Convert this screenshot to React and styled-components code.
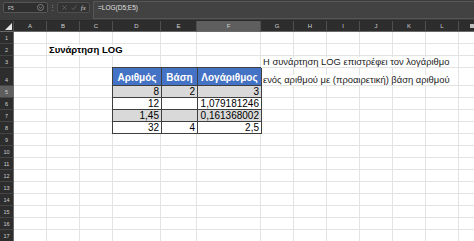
import React from 'react';
import styled, { createGlobalStyle } from 'styled-components';

const GlobalStyle = createGlobalStyle`
	html, body {
		margin: 0;
		padding: 0;
		background: #ffffff;
		overflow: hidden;
	}
	body {
		font-family: 'Liberation Sans', Arial, sans-serif;
	}
`;

const COLS = ['A', 'B', 'C', 'D', 'E', 'F', 'G', 'H', 'I', 'J', 'K', 'L'];
const COL_WIDTHS = [33, 33, 33, 48, 36, 64, 33, 33, 33, 33, 33, 33];
const ROW_HEIGHTS = [12, 12, 12, 18, 12, 12, 12, 12, 12, 12, 12, 12, 12, 12, 12, 12, 12];

const rows = [
	{ n: 8, base: 2, log: '3' },
	{ n: 12, base: '', log: '1,079181246' },
	{ n: '1,45', base: '', log: '0,161368002' },
	{ n: 32, base: 4, log: '2,5' },
];

const App = () => {
	return (
		<>
			<GlobalStyle />
			<Window>
				<FormulaBar>
					<NameBox>
						<span>F5</span>
						<svg width='7' height='7' viewBox='0 0 10 10'>
							<circle cx='5' cy='5' r='4.3' fill='none' stroke='#9a9a9a' strokeWidth='1' />
							<path d='M3 4.2 L5 6.2 L7 4.2' fill='none' stroke='#9a9a9a' strokeWidth='1' />
						</svg>
					</NameBox>
					<Dots>⋮</Dots>
					<FxBox>
						<svg width='7' height='7' viewBox='0 0 10 10'>
							<path d='M2 2 L8 8 M8 2 L2 8' stroke='#707070' strokeWidth='1' />
						</svg>
						<svg width='8' height='7' viewBox='0 0 10 10'>
							<path d='M1.5 5.5 L4 8 L8.5 2' fill='none' stroke='#707070' strokeWidth='1' />
						</svg>
						<Fx>fx</Fx>
					</FxBox>
					<FormulaInput>=LOG(D5;E5)</FormulaInput>
				</FormulaBar>
				<Sheet>
					<Corner>
						<svg width='7' height='7' viewBox='0 0 7 7'>
							<path d='M7 0 L7 7 L0 7 Z' fill='#e8e8e8' />
						</svg>
					</Corner>
					{COLS.map((c) => (
						<ColHead key={c} $active={c === 'F'}>
							{c}
						</ColHead>
					))}
					<ColHead $last>
						<ScrollNub />
					</ColHead>
					{ROW_HEIGHTS.map((h, r) => (
						<React.Fragment key={r}>
							<RowHead $active={r === 4} style={{ gridRow: r + 2 }}>
								{r + 1}
							</RowHead>
							{COLS.map((c, ci) => (
								<Cell key={c} style={{ gridRow: r + 2, gridColumn: ci + 2 }} />
							))}
							<Cell $last style={{ gridRow: r + 2, gridColumn: 14 }} />
						</React.Fragment>
					))}
					<Title>Συνάρτηση LOG</Title>
					<Note $row={4}>Η συνάρτηση LOG επιστρέφει τον λογάριθμο</Note>
					<Note $row={5}>ενός αριθμού με (προαιρετική) βάση αριθμού</Note>
					<Table>
						<Th>Αριθμός</Th>
						<Th>Βάση</Th>
						<Th>Λογάριθμος</Th>
						{rows.map((row, i) => (
							<React.Fragment key={i}>
								<Td $gray={i % 2 === 0}>{row.n}</Td>
								<Td $gray={i % 2 === 0}>{row.base}</Td>
								<Td $gray={i % 2 === 0}>{row.log}</Td>
							</React.Fragment>
						))}
					</Table>
				</Sheet>
			</Window>
		</>
	);
};

export default App;

const Window = styled.div`
	width: 474px;
	height: 241px;
	display: flex;
	flex-direction: column;
	overflow: hidden;
`;

const FormulaBar = styled.div`
	height: 21px;
	flex: none;
	display: flex;
	align-items: flex-start;
	background: #3c3c3c;
	border-bottom: 1px solid #2a2a2a;
	box-sizing: border-box;
	padding: 2px 0 0 3px;
`;

const NameBox = styled.div`
	width: 45px;
	height: 11px;
	box-sizing: border-box;
	display: flex;
	align-items: center;
	justify-content: space-between;
	padding: 0 3px 0 4px;
	background: #2f2f2f;
	border: 1px solid #565656;
	border-radius: 2px;
	font-size: 5px;
	color: #cfcfcf;
`;

const Dots = styled.div`
	width: 9px;
	text-align: center;
	font-size: 7px;
	line-height: 11px;
	color: #8a8a8a;
`;

const FxBox = styled.div`
	width: 33px;
	height: 11px;
	box-sizing: border-box;
	display: flex;
	align-items: center;
	justify-content: space-around;
	padding: 0 2px;
	background: #333333;
	border: 1px solid #4e4e4e;
	border-radius: 2px;
`;

const Fx = styled.span`
	font-family: 'Liberation Serif', serif;
	font-style: italic;
	font-size: 7px;
	color: #cfcfcf;
`;

const FormulaInput = styled.div`
	flex: 1;
	height: 18px;
	margin: -1px 0 0 3px;
	box-sizing: border-box;
	padding: 2px 0 0 4px;
	background: #424242;
	border: 1px solid #565656;
	border-right: none;
	font-size: 6.5px;
	color: #e0e0e0;
`;

const Sheet = styled.div`
	flex: 1;
	display: grid;
	grid-template-columns: 14px ${COL_WIDTHS.map((w) => `${w}px`).join(' ')} 1fr;
	grid-template-rows: 11px ${ROW_HEIGHTS.map((h) => `${h}px`).join(' ')};
	background: #ffffff;
`;

const Corner = styled.div`
	grid-row: 1;
	grid-column: 1;
	background: #2d2d2d;
	display: flex;
	align-items: flex-end;
	justify-content: flex-end;
	padding: 0 1px 1px 0;
	border-right: 1px solid #4a4a4a;
	border-bottom: 1px solid #6a6a6a;
`;

const ColHead = styled.div`
	grid-row: 1;
	background: ${(p) => (p.$active ? '#5e5e5e' : '#2d2d2d')};
	color: #cfcfcf;
	font-size: 6px;
	display: flex;
	align-items: center;
	justify-content: ${(p) => (p.$last ? 'flex-end' : 'center')};
	border-right: ${(p) => (p.$last ? 'none' : '1px solid #4f4f4f')};
	border-bottom: 1px solid #6a6a6a;
`;

const ScrollNub = styled.div`
	width: 4px;
	height: 4px;
	background: #bdbdbd;
`;

const RowHead = styled.div`
	grid-column: 1;
	background: ${(p) => (p.$active ? '#5e5e5e' : '#2d2d2d')};
	color: #cfcfcf;
	font-size: 5.5px;
	display: flex;
	align-items: flex-end;
	justify-content: center;
	padding-bottom: 2px;
	box-sizing: border-box;
	border-bottom: 1px solid #454545;
	border-right: 1px solid #6a6a6a;
`;

const Cell = styled.div`
	border-right: ${(p) => (p.$last ? 'none' : '1px solid #e3e3e3')};
	border-bottom: 1px solid #e3e3e3;
`;

const Title = styled.div`
	grid-row: 3;
	grid-column: 3 / span 3;
	z-index: 1;
	background: #ffffff;
	align-self: end;
	justify-self: start;
	margin: 0 0 1px 1px;
	font-weight: bold;
	font-size: 9.5px;
	line-height: 10px;
	white-space: nowrap;
	color: #000000;
	padding-left: 1px;
`;

const Note = styled.div`
	grid-row: ${(p) => p.$row};
	grid-column: 8 / span 7;
	z-index: 1;
	align-self: end;
	justify-self: start;
	background: #ffffff;
	margin: 0 0 1px 1px;
	padding-left: 1px;
	font-size: 9.4px;
	line-height: 10px;
	white-space: nowrap;
	color: #1a1a1a;
`;

const Table = styled.div`
	grid-row: 5 / span 5;
	grid-column: 5 / span 3;
	z-index: 2;
	margin: 0 0 0 -1px;
	display: grid;
	grid-template-columns: 49px 36px 64px;
	grid-template-rows: 18px repeat(4, 12px);
	border: 1px solid #3f3f3f;
	border-right: none;
	border-bottom: none;
	background: #ffffff;
	box-sizing: border-box;
	margin-top: -1px;
	height: 67px;
`;

const Th = styled.div`
	background: #4472c4;
	color: #ffffff;
	font-weight: bold;
	font-size: 10px;
	display: flex;
	align-items: center;
	justify-content: center;
	white-space: nowrap;
	border-right: 1px solid #3f3f3f;
	border-bottom: 1px solid #3f3f3f;
	padding-top: 1px;
`;

const Td = styled.div`
	background: ${(p) => (p.$gray ? '#d9d9d9' : '#ffffff')};
	color: #000000;
	font-size: 10px;
	line-height: 11px;
	text-align: right;
	padding-right: 2px;
	border-right: 1px solid #3f3f3f;
	border-bottom: 1px solid #3f3f3f;
`;
